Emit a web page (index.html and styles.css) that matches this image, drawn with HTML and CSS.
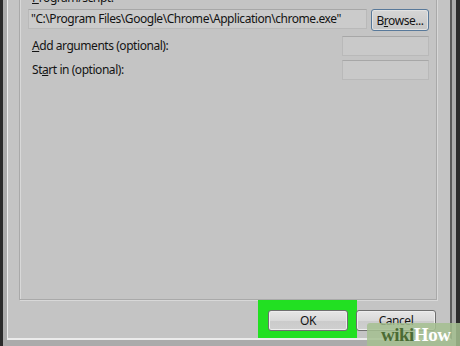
FILE: index.html
```html
<!DOCTYPE html>
<html lang="en">
<head>
    <meta charset="UTF-8">
    <meta name="viewport" content="width=device-width, initial-scale=1.0">
    <title>Edit Action</title>
    <link rel="stylesheet" href="styles.css">
</head>
<body>
    <div class="desk">
        <div class="frame">
            <div class="dialog">
                <div class="group">
                    <div class="label top-label"><u>P</u>rogram/script:</div>
                    <div class="row first-row">
                        <div class="field wide">"C:\Program Files\Google\Chrome\Application\chrome.exe"</div>
                        <button class="browse">B<u>r</u>owse...</button>
                    </div>
                    <div class="row">
                        <div class="label"><u>A</u>dd arguments (optional):</div>
                        <div class="field small"></div>
                    </div>
                    <div class="row">
                        <div class="label">St<u>a</u>rt in (optional):</div>
                        <div class="field small"></div>
                    </div>
                </div>
                <div class="footer">
                    <span class="highlight"><button class="btn">OK</button></span>
                    <button class="btn">Cancel</button>
                </div>
            </div>
        </div>
        <div class="watermark"><span class="wiki">wiki</span><span class="how">How</span></div>
    </div>
</body>
</html>
```

FILE: styles.css
```css
body {
    margin: 0;
    font-family: 'Noto Sans', sans-serif;
    font-size: 12px;
    letter-spacing: -0.45px;
    color: #141414;
}
.desk {
    position: relative;
    width: 460px;
    height: 346px;
    box-sizing: border-box;
    padding: 0 4px 0 3px;
    background-color: #2b2b2b;
    display: flex;
    flex-direction: column;
    overflow: hidden;
}
.frame {
    flex: 1;
    display: flex;
    flex-direction: column;
    padding: 0 4px 6px 4px;
    background-color: #ababab;
}
.dialog {
    flex: 1;
    display: flex;
    flex-direction: column;
    overflow: hidden;
    background-color: #c4c4c4;
    border-left: 1px solid #ececec;
    border-right: 2px solid #5a5a5a;
    border-bottom: 2px solid #ececec;
}
.group {
    flex: 1;
    margin: -30px 13px 0 11px;
    padding: 18px 7px 0 8px;
    border: 1px solid #a9a9a9;
    box-shadow: inset 1px 1px 0 #d8d8d8, 1px 1px 0 #d8d8d8;
}
.label {
    line-height: 18px;
    padding-left: 4px;
}
.top-label {
    margin-bottom: 2px;
}
.row {
    display: flex;
    align-items: center;
    justify-content: space-between;
    height: 20px;
    margin-bottom: 4px;
}
.first-row {
    align-items: flex-start;
    height: 22px;
    margin-bottom: 5px;
}
.field {
    box-sizing: border-box;
    height: 20px;
    background-color: #cbcbcb;
    border: 1px solid #b9b9b9;
    border-top-color: #a7a7a7;
}
.wide {
    width: 339px;
    padding-left: 2px;
    line-height: 18px;
    white-space: nowrap;
    overflow: hidden;
}
.small {
    width: 87px;
    background-color: #c9c9c9;
}
button {
    font-family: 'Noto Sans', sans-serif;
    font-size: 12px;
    letter-spacing: -0.45px;
    color: #141414;
    padding: 0;
    cursor: pointer;
}
.browse {
    width: 58px;
    height: 22px;
    border: 1px solid #58799a;
    border-radius: 3px;
    background: linear-gradient(#d6d6d6, #c6c6c6);
    box-shadow: inset 0 0 0 1px #e2e2e2;
}
.footer {
    display: flex;
    justify-content: flex-end;
    align-items: flex-start;
    gap: 8px;
    padding: 10px 14px 7px 0;
}
.btn {
    display: block;
    width: 80px;
    height: 21px;
    border: 1px solid #6f6f6f;
    border-radius: 3px;
    background: linear-gradient(#e6e6e6 0%, #d9d9d9 50%, #cbcbcb 51%, #cfcfcf 100%);
    box-shadow: inset 0 0 0 1px #ededed;
}
.highlight {
    margin: -10px -9px -9px -10px;
    padding: 10px 9px 9px 10px;
    background-color: #22e022;
}
.watermark {
    position: absolute;
    right: 0;
    bottom: 0;
    width: 79px;
    height: 23px;
    padding-left: 14px;
    border-radius: 3px 0 0 0;
    background-color: rgba(165, 192, 145, 0.85);
    font-family: 'Liberation Serif', serif;
    font-weight: bold;
    font-size: 19px;
    letter-spacing: -0.5px;
    line-height: 24px;
    white-space: nowrap;
}
.wiki {
    color: #4b6b34;
}
.how {
    color: #ffffff;
}
```
